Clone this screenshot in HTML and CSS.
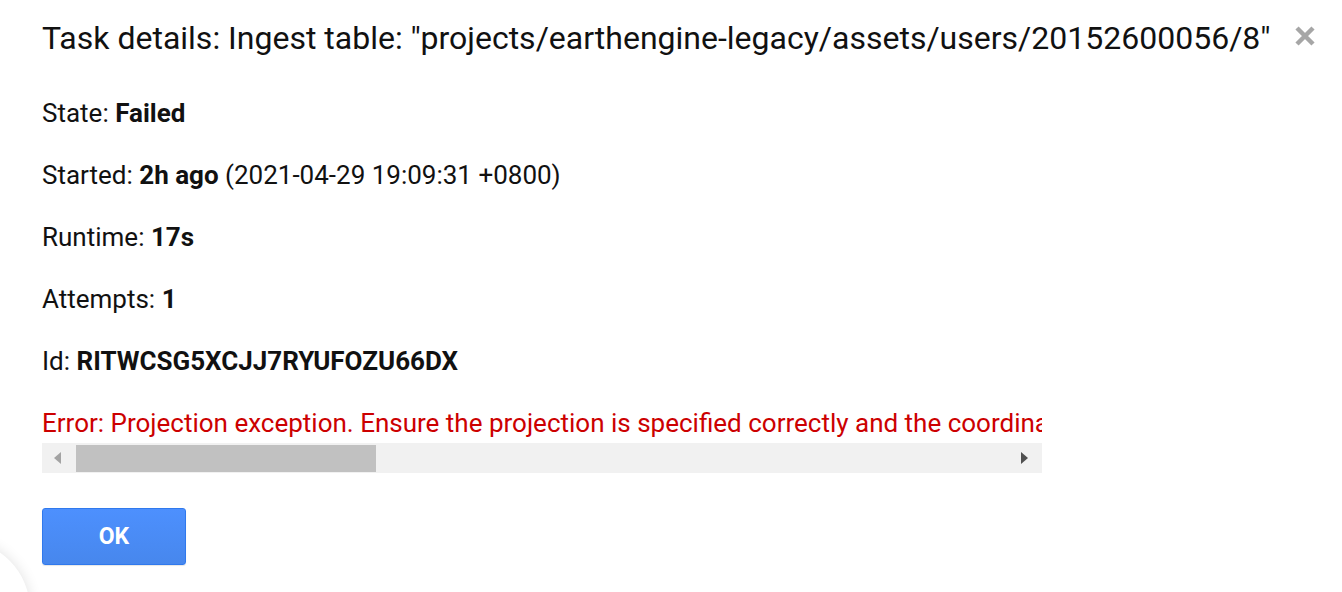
FILE: index.html
```html
<!DOCTYPE html>
<html>
<head>
<meta charset="utf-8">
<link rel="stylesheet" href="styles.css">
</head>
<body>
<div class="dialog">
  <div class="header">
    <div class="title">Task details: Ingest table: "projects/earthengine-legacy/assets/users/20152600056/8"</div>
    <div class="close" aria-label="Close">
      <svg width="22" height="22" viewBox="0 0 22 22"><path d="M3 3 L19 19 M19 3 L3 19" stroke="#a6a6a6" stroke-width="4.5" stroke-linecap="butt"/></svg>
    </div>
  </div>
  <div class="row">State: <b>Failed</b></div>
  <div class="row">Started: <b>2h ago</b> (2021-04-29 19:09:31 +0800)</div>
  <div class="row">Runtime: <b>17s</b></div>
  <div class="row">Attempts: <b>1</b></div>
  <div class="row">Id: <b>RITWCSG5XCJJ7RYUFOZU66DX</b></div>
  <div class="errbox">
    <div class="error">Error: Projection exception. Ensure the projection is specified correctly and the coordinates are valid.</div>
    <div class="scrollbar">
      <span class="arrow left"></span>
      <div class="track"><div class="thumb"></div></div>
      <span class="arrow right"></span>
    </div>
  </div>
  <div class="buttons"><button class="ok">OK</button></div>
</div>
<div class="fabclip"><div class="fab"></div></div>
</body>
</html>
```
FILE: styles.css
```css
html, body {
  margin: 0;
  padding: 0;
  background: #fff;
  overflow: hidden;
  width: 1342px;
  height: 592px;
}
body {
  font-family: Roboto, "Liberation Sans", sans-serif;
  color: #111;
  position: relative;
}
.dialog {
  padding: 18px 0 0 42px;
}
.header {
  display: flex;
  align-items: center;
  height: 40px;
}
.title {
  font-size: 32px;
  color: #111;
  white-space: nowrap;
}
.close {
  margin-left: 23px;
  margin-top: -4px;
  width: 22px;
  height: 22px;
  display: flex;
}
.row {
  font-size: 26px;
  line-height: 30px;
  margin-top: 32px;
}
.header + .row { margin-top: 40px; }
.row b { font-weight: 700; }
.errbox {
  width: 1000px;
  margin-top: 32px;
}
.error {
  font-size: 26px;
  line-height: 30px;
  color: #c00;
  white-space: nowrap;
  overflow: hidden;
}
.scrollbar {
  margin-top: 5px;
  height: 30px;
  background: #f1f1f1;
  display: flex;
  align-items: center;
}
.arrow {
  width: 0;
  height: 0;
  border-top: 6px solid transparent;
  border-bottom: 6px solid transparent;
}
.arrow.left {
  border-right: 7px solid #a3a3a3;
  margin: 0 15px 0 12px;
}
.arrow.right {
  border-left: 7px solid #505050;
  margin: 0 14px 0 17px;
}
.track {
  flex: 1;
  height: 27px;
}
.thumb {
  width: 300px;
  height: 27px;
  background: #c1c1c1;
}
.buttons {
  margin-top: 35px;
}
.ok {
  width: 144px;
  height: 57px;
  border: 1px solid #3079ed;
  border-radius: 3px;
  background: linear-gradient(#4d90fe, #4787ed);
  color: #fff;
  font-family: Roboto, "Liberation Sans", sans-serif;
  font-weight: 700;
  font-size: 23px;
  padding: 0;
  box-shadow: 0 1px 1px rgba(0,0,0,0.1);
}
.fabclip {
  position: absolute;
  left: 0;
  top: 520px;
  width: 60px;
  height: 72px;
  overflow: hidden;
}
.fab {
  position: absolute;
  left: -110px;
  top: 20px;
  width: 140px;
  height: 140px;
  border-radius: 50%;
  background: #fff;
  box-shadow: 0 0 14px rgba(0,0,0,0.12);
}
```
